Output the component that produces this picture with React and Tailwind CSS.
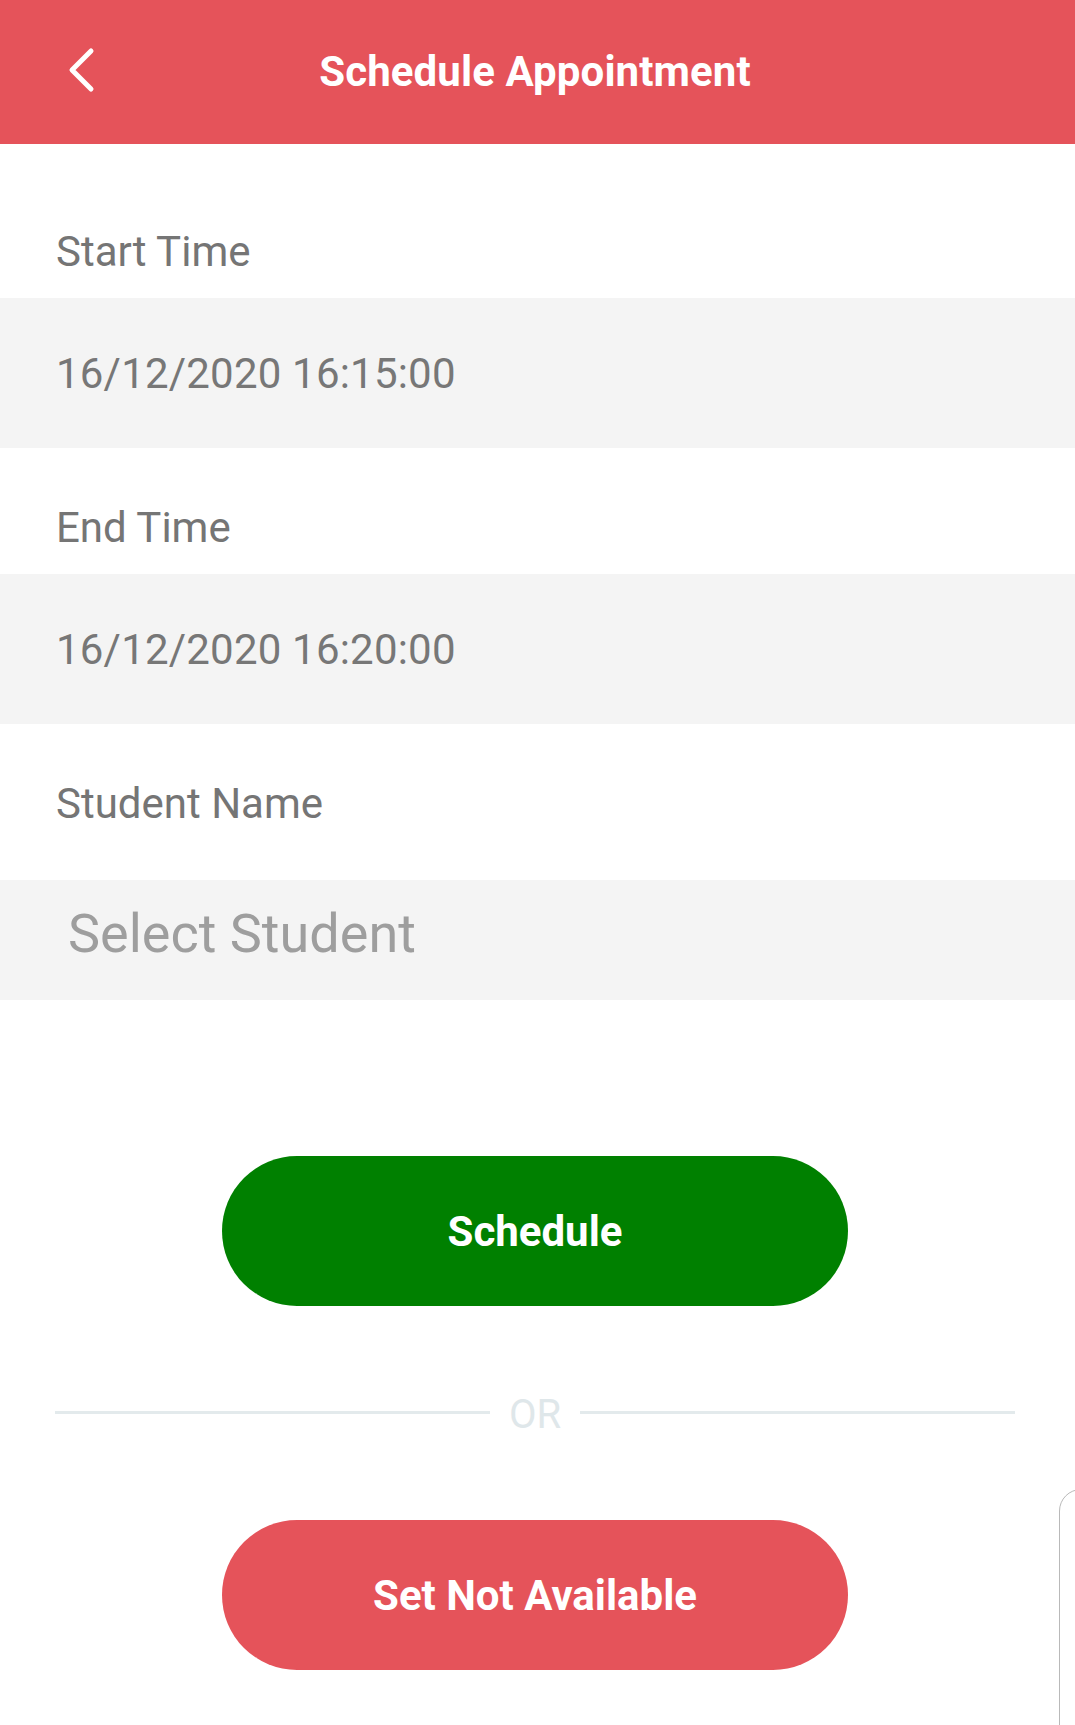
export default function App() {
  const font = { fontFamily: 'Roboto, "Noto Sans", sans-serif' }

  return (
    <div className="relative w-[1075px] h-[1725px] overflow-hidden bg-white" style={font}>
      {/* header */}
      <div className="relative h-[144px] bg-[#e5535a] flex items-center justify-center pr-[5px]">
        <button className="absolute left-[64px] top-[44px]">
          <svg width="34" height="52" viewBox="0 0 34 52" fill="none">
            <path d="M27 7 L8 26 L27 45" stroke="white" strokeWidth="5" strokeLinecap="round" strokeLinejoin="round" />
          </svg>
        </button>
        <h1 className="text-[42px] leading-[42px] font-bold text-white tracking-[0.1px]">Schedule Appointment</h1>
      </div>

      {/* start time */}
      <div className="pt-[87px] pb-[25px] px-[56px] text-[42px] leading-[42px] text-[#757575]">Start Time</div>
      <div className="h-[150px] bg-[#f4f4f4] flex items-center px-[56px] text-[42px] tracking-[0.2px] text-[#777777]">16/12/2020 16:15:00</div>

      {/* end time */}
      <div className="pt-[59px] pb-[25px] px-[56px] text-[42px] leading-[42px] text-[#757575]">End Time</div>
      <div className="h-[150px] bg-[#f4f4f4] flex items-center px-[56px] text-[42px] tracking-[0.2px] text-[#777777]">16/12/2020 16:20:00</div>

      {/* student */}
      <div className="pt-[59px] pb-[55px] px-[56px] text-[42px] leading-[42px] text-[#757575]">Student Name</div>
      <div className="h-[120px] bg-[#f4f4f4] flex items-center px-[68px] pb-[14px] text-[54px] text-[#9e9e9e]">Select Student</div>

      {/* actions */}
      <div className="w-[1070px] flex flex-col items-center pt-[156px]">
        <button className="w-[626px] h-[150px] rounded-full bg-[#008000] text-white text-[42px] font-bold">Schedule</button>

        <div className="w-full flex items-center gap-[19px] px-[55px] mt-[84px]">
          <div className="flex-1 h-[3px] bg-[#e3eaec]" />
          <span className="pt-[5px] text-[40px] leading-[40px] text-[#dfe7ea]">OR</span>
          <div className="flex-1 h-[3px] bg-[#e3eaec]" />
        </div>

        <button className="mt-[85px] w-[626px] h-[150px] rounded-full bg-[#e5535a] text-white text-[42px] font-bold">Set Not Available</button>
      </div>

      {/* card edge peeking in from the right */}
      <div className="absolute left-[1059px] top-[1489px] w-[120px] h-[300px] rounded-tl-[22px] border border-[#b9b9b9] bg-white" />
    </div>
  )
}
